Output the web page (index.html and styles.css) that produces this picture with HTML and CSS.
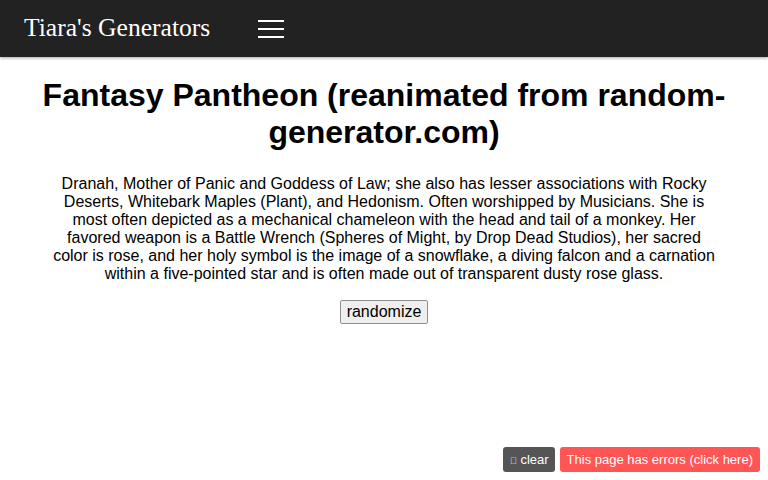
FILE: index.html
```html
<!DOCTYPE html>
<html>
<head>
<meta charset="utf-8">
<link rel="stylesheet" href="styles.css">
</head>
<body>
<nav class="navbar">
  <a class="brand">Tiara's Generators</a>
  <button class="burger" aria-label="menu">
    <svg width="26" height="18" viewBox="0 0 26 18"><path d="M0 1H26M0 9H26M0 17H26" stroke="#fff" stroke-width="2"/></svg>
  </button>
</nav>
<main class="content">
  <h1 class="title">Fantasy Pantheon (reanimated from random-generator.com)</h1>
  <p class="desc">Dranah, Mother of Panic and Goddess of Law; she also has lesser associations with Rocky Deserts, Whitebark Maples (Plant), and Hedonism. Often worshipped by Musicians. She is most often depicted as a mechanical chameleon with the head and tail of a monkey. Her favored weapon is a Battle Wrench (Spheres of Might, by Drop Dead Studios), her sacred color is rose, and her holy symbol is the image of a snowflake, a diving falcon and a carnation within a five-pointed star and is often made out of transparent dusty rose glass.</p>
  <div class="actions"><button class="randomize">randomize</button></div>
</main>
<div class="errbar">
  <button class="clear"><span class="ico">&#xf1f8;</span> clear</button>
  <button class="errors">This page has errors (click here)</button>
</div>
</body>
</html>
```
FILE: styles.css
```css
html, body { margin: 0; padding: 0; background: #fff; }
body { font-family: "Liberation Sans", Arial, sans-serif; color: #000; }
.navbar {
  height: 57px;
  background: #222;
  display: flex;
  align-items: center;
  padding: 0 24px;
  gap: 48px;
  box-shadow: 0 1px 3px rgba(0,0,0,0.35);
}
.brand {
  font-family: "Liberation Serif", "Times New Roman", serif;
  font-size: 25.6px;
  color: #fff;
  line-height: 1;
  padding-bottom: 1px;
}
.burger {
  background: none;
  border: 0;
  padding: 0;
  width: 26px;
  height: 18px;
  display: flex;
  align-items: center;
  margin-top: 1px;
}
.content { padding: 20px 40px 0; text-align: center; }
.title {
  font-size: 32px;
  font-weight: bold;
  line-height: 37px;
  margin: 0 0 24px;
}
.desc {
  font-size: 16px;
  line-height: 18px;
  margin: 0 13px 17px;
}
.actions { display: flex; justify-content: center; }
.randomize {
  font-family: "Liberation Sans", Arial, sans-serif;
  font-size: 16px;
  padding: 1px 6px 2px;
  height: 24px;
  border: 1px solid #8f8f8f;
  border-radius: 2px;
  background: #efefef;
  color: #000;
}
.errbar {
  position: fixed;
  right: 8px;
  bottom: 8px;
  display: flex;
  gap: 5px;
}
.errbar button {
  font-family: "Liberation Sans", Arial, sans-serif;
  font-size: 13px;
  border: 0;
  border-radius: 3px;
  height: 25px;
  padding: 0 7px;
  color: #fff;
}
.errbar .clear { background: #555; padding: 0 6px 0 7px; }
.errors { background: #f55; }
.ico { font-size: 9px; }
```
